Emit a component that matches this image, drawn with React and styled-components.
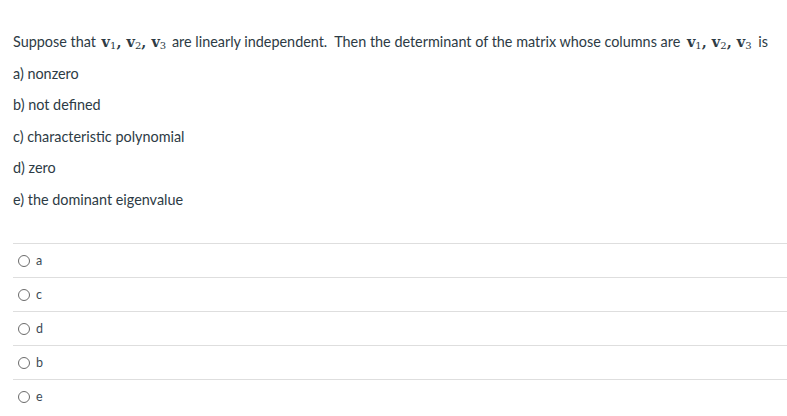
import React from 'react';
import styled, { createGlobalStyle } from 'styled-components';

const GlobalStyle = createGlobalStyle`
  html, body {
    margin: 0;
    padding: 0;
    background: #fff;
  }
  body {
    font-family: Lato, "Liberation Sans", sans-serif;
    color: #2d3b45;
  }
`;

const Page = styled.div`
  padding: 31px 0 0 13px;
`;

const Question = styled.div`
  font-size: 14.4px;
  line-height: 21px;
`;

const Para = styled.p`
  margin: 0 0 10.5px;
`;

const Vec = styled.span`
  font-family: "DejaVu Serif", "Liberation Serif", serif;
  font-weight: bold;
  font-size: 14.5px;
  line-height: 0;
  white-space: nowrap;
  margin: 0 ${p => p.$gap || 2}px;
  sub {
    font-weight: normal;
    font-size: 10px;
    line-height: 0;
    vertical-align: -2px;
  }
`;

const Answers = styled.div`
  margin-top: 33px;
`;

const Row = styled.label`
  display: flex;
  align-items: center;
  height: 34px;
  border-top: 1px solid #dedede;
  padding-left: 5px;
  font-size: 12.5px;
  color: #3b4a55;
  box-sizing: border-box;
`;

const Radio = styled.span`
  width: 10px;
  height: 10px;
  border: 1px solid #6b6b6b;
  border-radius: 50%;
  margin-right: 6px;
  flex-shrink: 0;
  position: relative;
  top: 1px;
`;

const Vectors = ({ gap }) => (
  <Vec $gap={gap}>
    v<sub>1</sub>, v<sub>2</sub>, v<sub>3</sub>
  </Vec>
);

const choices = ['a', 'c', 'd', 'b', 'e'];

export default function App() {
  return (
    <Page>
      <GlobalStyle />
      <Question>
        <Para>
          Suppose that <Vectors gap={0} /> are linearly independent.&nbsp; Then the determinant of the matrix whose columns are <Vectors gap={3} /> is
        </Para>
        <Para>a) nonzero</Para>
        <Para>b) not defined</Para>
        <Para>c) characteristic polynomial</Para>
        <Para>d) zero</Para>
        <Para>e) the dominant eigenvalue</Para>
      </Question>
      <Answers>
        {choices.map(c => (
          <Row key={c}>
            <Radio />
            {c}
          </Row>
        ))}
      </Answers>
    </Page>
  );
}
